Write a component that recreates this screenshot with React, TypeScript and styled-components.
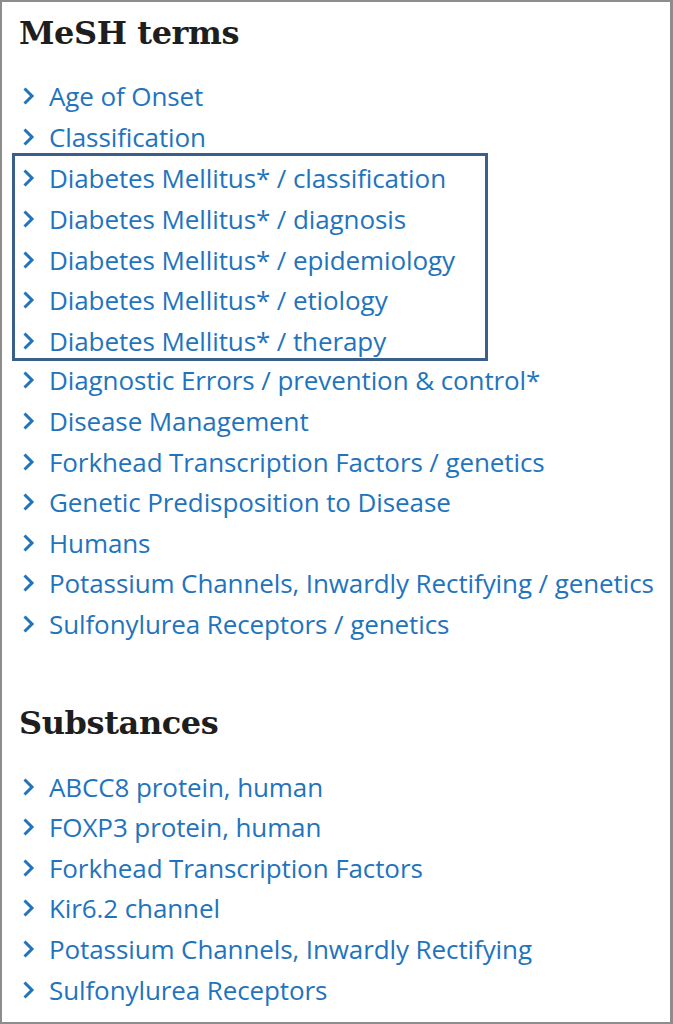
import React from "react";
import styled, { createGlobalStyle } from "styled-components";

const GlobalStyle = createGlobalStyle`
  html, body {
    margin: 0;
    padding: 0;
    background: #ffffff;
  }
  * {
    box-sizing: border-box;
  }
`;

const Panel = styled.div`
  width: 673px;
  height: 1024px;
  border: 2px solid #8d8d8d;
  border-right-width: 3px;
  padding: 0 0 0 10px;
  background: #ffffff;
  overflow: hidden;
`;

const Section = styled.section<{ $gap: number }>`
  display: flex;
  flex-direction: column;
  margin-top: ${(p) => p.$gap}px;
`;

const Heading = styled.h2`
  margin: 0 0 0 7px;
  font-family: "DejaVu Serif", "Liberation Serif", serif;
  font-weight: 700;
  font-size: 32px;
  line-height: 44px;
  color: #1e1e1e;
  letter-spacing: -0.4px;
`;

const List = styled.ul<{ $top?: number; $bottom?: number }>`
  list-style: none;
  margin: ${(p) => p.$top ?? 0}px 0 ${(p) => p.$bottom ?? 0}px 0;
  padding: 0;
  display: flex;
  flex-direction: column;
`;

// the boxed group of terms; its frame sits over the row edges
const Highlight = styled.li`
  border: 3px solid #3b5f8b;
  width: 476px;
  margin: -4px 0 -1px 0;
  padding-top: 2px;
  list-style: none;
`;

const Item = styled.li<{ $inset: number }>`
  display: flex;
  align-items: center;
  gap: 11px;
  height: 40.6px;
  padding-left: ${(p) => p.$inset}px;
  font-family: "Open Sans", "Noto Sans", sans-serif;
  font-size: 26px;
  letter-spacing: -0.1px;
  color: #1f74bd;
  white-space: nowrap;
`;

const Chevron = () => (
  <svg width="16" height="20" viewBox="0 0 16 20" fill="none">
    <path
      d="M2.5 2.5 L10 10 L2.5 17.5"
      stroke="#1f74bd"
      strokeWidth="3"
      strokeLinecap="butt"
      strokeLinejoin="miter"
    />
  </svg>
);

const meshBefore = ["Age of Onset", "Classification"];
const meshHighlighted = [
  "Diabetes Mellitus* / classification",
  "Diabetes Mellitus* / diagnosis",
  "Diabetes Mellitus* / epidemiology",
  "Diabetes Mellitus* / etiology",
  "Diabetes Mellitus* / therapy",
];
const meshAfter = [
  "Diagnostic Errors / prevention & control*",
  "Disease Management",
  "Forkhead Transcription Factors / genetics",
  "Genetic Predisposition to Disease",
  "Humans",
  "Potassium Channels, Inwardly Rectifying / genetics",
  "Sulfonylurea Receptors / genetics",
];
const substances = [
  "ABCC8 protein, human",
  "FOXP3 protein, human",
  "Forkhead Transcription Factors",
  "Kir6.2 channel",
  "Potassium Channels, Inwardly Rectifying",
  "Sulfonylurea Receptors",
];

function Term({ label, inset = 10 }: { label: string; inset?: number }) {
  return (
    <Item $inset={inset}>
      <Chevron />
      <span>{label}</span>
    </Item>
  );
}

export default function App() {
  return (
    <>
      <GlobalStyle />
      <Panel>
        <Section $gap={9}>
          <Heading>MeSH terms</Heading>
          <List $top={21}>
            {meshBefore.map((t) => (
              <Term key={t} label={t} />
            ))}
            <Highlight>
              <List $bottom={-3}>
                {meshHighlighted.map((t) => (
                  <Term key={t} label={t} inset={7} />
                ))}
              </List>
            </Highlight>
            {meshAfter.map((t) => (
              <Term key={t} label={t} />
            ))}
          </List>
        </Section>
        <Section $gap={57}>
          <Heading>Substances</Heading>
          <List $top={21}>
            {substances.map((t) => (
              <Term key={t} label={t} />
            ))}
          </List>
        </Section>
      </Panel>
    </>
  );
}
